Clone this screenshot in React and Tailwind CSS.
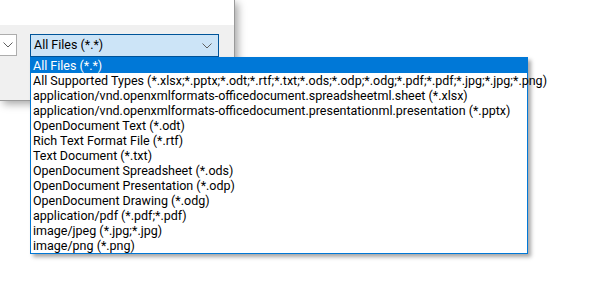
import React from "react";

const options = [
  "All Files (*.*)",
  "All Supported Types (*.xlsx;*.pptx;*.odt;*.rtf;*.txt;*.ods;*.odp;*.odg;*.pdf;*.pdf;*.jpg;*.jpg;*.png)",
  "application/vnd.openxmlformats-officedocument.spreadsheetml.sheet (*.xlsx)",
  "application/vnd.openxmlformats-officedocument.presentationml.presentation (*.pptx)",
  "OpenDocument Text (*.odt)",
  "Rich Text Format File (*.rtf)",
  "Text Document (*.txt)",
  "OpenDocument Spreadsheet (*.ods)",
  "OpenDocument Presentation (*.odp)",
  "OpenDocument Drawing (*.odg)",
  "application/pdf (*.pdf;*.pdf)",
  "image/jpeg (*.jpg;*.jpg)",
  "image/png (*.png)",
];

function Chevron() {
  return (
    <svg width="10" height="6" viewBox="0 0 10 6" className="shrink-0">
      <path d="M0.5 0.5 L5 5 L9.5 0.5" fill="none" stroke="#606060" strokeWidth="1" />
    </svg>
  );
}

export default function App() {
  return (
    <div
      className="relative w-[608px] h-[295px] bg-white overflow-hidden"
      style={{ fontFamily: 'Roboto, "Noto Sans", sans-serif' }}
    >
      {/* dialog behind */}
      <div className="w-[235px] h-[101px] flex flex-col border-r border-b border-[#9a9a9a] shadow-[3px_3px_8px_rgba(0,0,0,0.35)]">
        <div className="h-[25px] bg-white" />
        <div className="flex-1 bg-[#f0f0f0] flex items-start pt-[9px] gap-[13px]">
          <div className="w-[17px] h-[22px] bg-white border border-l-0 border-[#adadad] flex items-center justify-end pr-[3px]">
            <Chevron />
          </div>
          <div className="w-[189px] h-[23px] bg-[#cce4f7] border border-[#005499] flex items-center justify-between pl-[3px] pr-[6px] text-[12.5px] text-black leading-none">
            <span>All Files (*.*)</span>
            <Chevron />
          </div>
        </div>
      </div>

      {/* open dropdown list */}
      <div className="absolute left-[30px] top-[57px] w-[498px] border border-[#0078d7] bg-white shadow-[3px_3px_4px_rgba(0,0,0,0.35)]">
        {options.map((o, i) => (
          <div
            key={i}
            className={
              "h-[15px] pl-[2px] text-[12.5px] leading-[15px] whitespace-nowrap " +
              (i === 0 ? "bg-[#0078d7] text-white" : "text-black")
            }
          >
            {o}
          </div>
        ))}
      </div>
    </div>
  );
}
